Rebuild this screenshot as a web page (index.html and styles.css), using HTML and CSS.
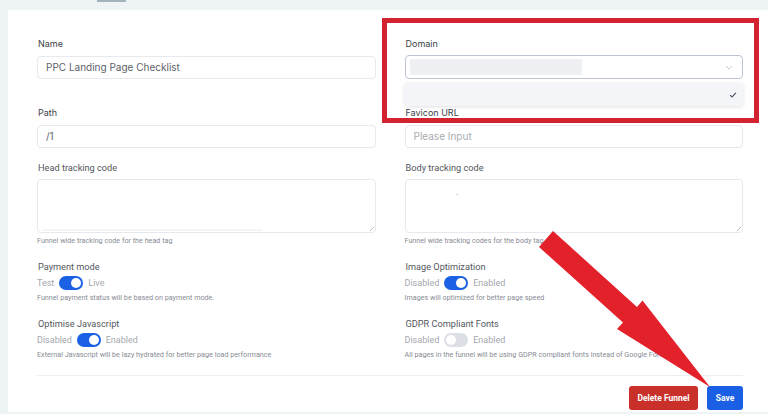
FILE: index.html
```html
<!DOCTYPE html>
<html lang="en">
<head>
    <meta charset="UTF-8">
    <meta name="viewport" content="width=device-width, initial-scale=1.0">
    <title>Funnel Settings</title>
    <link rel="stylesheet" href="styles.css">
</head>
<body>
    <div class="tabs">
        <span class="tab-line"></span>
    </div>

    <div class="card">
        <div class="row row-first">
            <div class="field">
                <label class="label">Name</label>
                <div class="input">PPC Landing Page Checklist</div>
            </div>
            <div class="field">
                <label class="label">Domain</label>
                <div class="select">
                    <span class="redacted"></span>
                    <svg class="chevron" width="8" height="5" viewBox="0 0 8 5"><path d="M1 1l3 3 3-3" fill="none" stroke="#c8ccd3" stroke-width="1"/></svg>
                </div>
                <div class="dropdown">
                    <svg class="check" width="8" height="6" viewBox="0 0 8 6"><path d="M1 3.2l2 1.8 4-4.2" fill="none" stroke="#4a5568" stroke-width="1.1"/></svg>
                </div>
            </div>
        </div>

        <div class="row row-path">
            <div class="field">
                <label class="label">Path</label>
                <div class="input">/1</div>
            </div>
            <div class="field">
                <label class="label">Favicon URL</label>
                <div class="input placeholder">Please Input</div>
            </div>
        </div>

        <div class="row row-code">
            <div class="field">
                <label class="label label-alt">Head tracking code</label>
                <div class="textarea"><span class="blur-line"></span></div>
                <p class="help">Funnel wide tracking code for the head tag</p>
            </div>
            <div class="field">
                <label class="label label-alt">Body tracking code</label>
                <div class="textarea"><span class="blur-dot"></span></div>
                <p class="help">Funnel wide tracking codes for the body tag</p>
            </div>
        </div>

        <div class="row row-switch">
            <div class="field">
                <label class="label label-alt">Payment mode</label>
                <div class="switch-row">
                    <span>Test</span>
                    <span class="switch on"></span>
                    <span>Live</span>
                </div>
                <p class="help">Funnel payment status will be based on payment mode.</p>
            </div>
            <div class="field">
                <label class="label label-alt">Image Optimization</label>
                <div class="switch-row">
                    <span>Disabled</span>
                    <span class="switch on"></span>
                    <span>Enabled</span>
                </div>
                <p class="help">Images will optimized for better page speed</p>
            </div>
        </div>

        <div class="row row-switch">
            <div class="field">
                <label class="label label-alt">Optimise Javascript</label>
                <div class="switch-row">
                    <span>Disabled</span>
                    <span class="switch on"></span>
                    <span>Enabled</span>
                </div>
                <p class="help">External Javascript will be lazy hydrated for better page load performance</p>
            </div>
            <div class="field">
                <label class="label label-alt">GDPR Compliant Fonts</label>
                <div class="switch-row">
                    <span>Disabled</span>
                    <span class="switch"></span>
                    <span>Enabled</span>
                </div>
                <p class="help">All pages in the funnel will be using GDPR compliant fonts instead of Google Fonts</p>
            </div>
        </div>

        <div class="actions">
            <button class="btn btn-danger">Delete Funnel</button>
            <button class="btn btn-primary">Save</button>
        </div>
    </div>

    <!-- annotation overlays -->
    <div class="highlight"></div>
    <svg class="arrow" width="768" height="414" viewBox="0 0 768 414">
        <polygon points="553,231 637,307 642.5,300.5 710,387 617,329 623,322.5 539,247" fill="#e3212b"/>
    </svg>
</body>
</html>
```

FILE: styles.css
```css
body {
    margin: 0;
    padding: 0;
    background-color: #eef3f6;
    font-family: Inter, "Noto Sans", sans-serif;
    overflow: hidden;
    position: relative;
    height: 414px;
}
.tabs {
    height: 10px;
    padding-left: 97px;
}
.tab-line {
    display: block;
    width: 29px;
    height: 2px;
    background-color: #a3b4bc;
}
.card {
    margin-left: 8px;
    height: 402px;
    box-sizing: border-box;
    background-color: #fff;
    padding: 28px 25px 0 29px;
}

.row {
    display: grid;
    grid-template-columns: 1fr 1fr;
    column-gap: 29px;
}
.row-path {
    margin-top: 28px;
}
.row-code {
    margin-top: 14px;
}
.row-switch {
    margin-top: 15px;
}
.field {
    position: relative;
}
.label {
    display: block;
    font-size: 9px;
    line-height: 12px;
    color: #3d4148;
    margin-bottom: 6px;
    padding-left: 1px;
}
.label-alt {
    font-family: Roboto, "Noto Sans", sans-serif;
    font-size: 9.2px;
    color: #54575d;
    margin-bottom: 5px;
}
.row-switch .label-alt {
    margin-bottom: 3px;
}

.input {
    height: 23px;
    box-sizing: border-box;
    border: 1px solid #e6e9ee;
    border-radius: 4px;
    padding-left: 8px;
    font-size: 10px;
    line-height: 21px;
    color: #5e6269;
}
.placeholder {
    color: #a8abb2;
}
.select {
    height: 24px;
    box-sizing: border-box;
    border: 1px solid #bcc4d2;
    border-radius: 4px;
    display: flex;
    align-items: center;
    justify-content: space-between;
    padding: 0 9px 0 4px;
    margin-top: -1px;
}
.redacted {
    width: 172px;
    height: 16px;
    background-color: #eff0f4;
}
.dropdown {
    position: absolute;
    left: 0;
    right: 0;
    top: 45px;
    height: 23px;
    background-color: #f4f5f8;
    box-shadow: 0 1px 4px rgba(0, 0, 0, 0.12);
    border-radius: 2px;
    display: flex;
    align-items: center;
    justify-content: flex-end;
    padding-right: 6px;
    box-sizing: border-box;
}

.textarea {
    height: 54px;
    box-sizing: border-box;
    border: 1px solid #e6e9ee;
    border-radius: 4px;
    position: relative;
}
.textarea::after {
    content: "";
    position: absolute;
    right: 1px;
    bottom: 1px;
    width: 4px;
    height: 4px;
    background: linear-gradient(135deg, transparent 50%, #b5b9c0 50%, #b5b9c0 62%, transparent 62%);
}
.blur-line {
    position: absolute;
    left: 4px;
    bottom: 1px;
    width: 220px;
    height: 2px;
    background-color: #f4f5f6;
}
.blur-dot {
    position: absolute;
    left: 50px;
    top: 14px;
    width: 2px;
    height: 1px;
    background-color: #d5d8dc;
}
.help {
    margin: 3px 0 0 0;
    font-family: Roboto, "Noto Sans", sans-serif;
    font-size: 7.2px;
    line-height: 10px;
    color: #878c94;
}

.switch-row {
    display: flex;
    align-items: center;
    gap: 5px;
    height: 14px;
    font-family: Roboto, "Noto Sans", sans-serif;
    font-size: 9px;
    color: #a3a7ae;
}
.switch {
    position: relative;
    width: 24px;
    height: 14px;
    border-radius: 7px;
    background-color: #dcdfe6;
    box-sizing: border-box;
}
.switch::after {
    content: "";
    position: absolute;
    top: 2px;
    left: 2px;
    width: 10px;
    height: 10px;
    border-radius: 50%;
    background-color: #fff;
}
.switch.on {
    background-color: #1b61e6;
}
.switch.on::after {
    left: 12px;
}

.actions {
    margin-top: 15px;
    border-top: 1px solid #eceef1;
    padding-top: 10px;
    display: flex;
    justify-content: flex-end;
    gap: 9px;
}
.btn {
    height: 24px;
    border: none;
    border-radius: 3px;
    color: #fff;
    font-family: Roboto, "Noto Sans", sans-serif;
    font-size: 8.5px;
    font-weight: 700;
    padding: 0;
}
.btn-danger {
    width: 69px;
    background-color: #c9302a;
}
.btn-primary {
    width: 36px;
    background-color: #1b5fe4;
}

.highlight {
    position: absolute;
    left: 382px;
    top: 18px;
    width: 377px;
    height: 105px;
    box-sizing: border-box;
    border: 5px solid #d42330;
}
.arrow {
    position: absolute;
    left: 0;
    top: 0;
}
```
